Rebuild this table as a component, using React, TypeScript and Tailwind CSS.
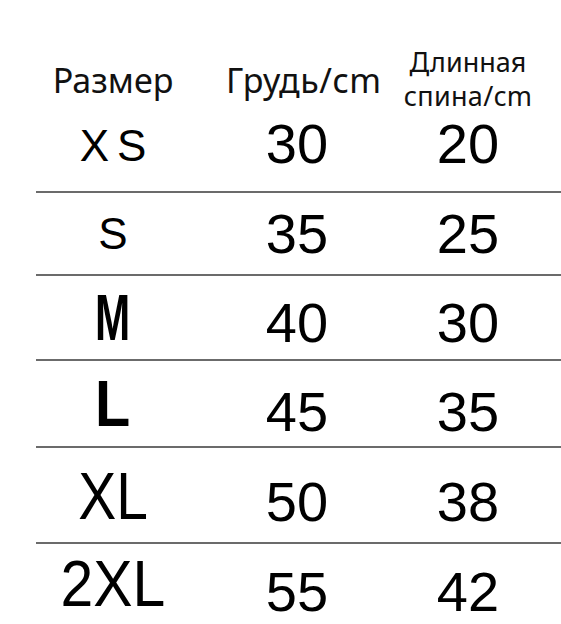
const rows = [
  {
    size: "XS",
    sizeClass: "text-[44px] font-normal tracking-[8px] pl-[8px]",
    chest: "30",
    back: "20",
    rowClass: "h-[91px]",
    numPad: "pb-[3px] leading-none",
  },
  {
    size: "S",
    sizeClass: "text-[44px] font-normal",
    chest: "35",
    back: "25",
    rowClass: "h-[81px]",
    numPad: "leading-none",
  },
  {
    size: "M",
    sizeClass: "text-[64px] font-bold scale-x-66",
    chest: "40",
    back: "30",
    rowClass: "h-[83px]",
    numPad: "pt-[11px] leading-none",
  },
  {
    size: "L",
    sizeClass: "text-[64px] font-bold scale-x-90",
    chest: "45",
    back: "35",
    rowClass: "h-[85px]",
    numPad: "pt-[17px] leading-none",
  },
  {
    size: "XL",
    sizeClass: "text-[67px] font-normal scale-x-85",
    chest: "50",
    back: "38",
    rowClass: "h-[94px]",
    numPad: "pt-[14px] leading-none",
  },
  {
    size: "2XL",
    sizeClass: "text-[64px] font-normal scale-x-92",
    chest: "55",
    back: "42",
    rowClass: "h-[80px]",
    numPad: "pt-[16px] leading-[44px]",
  },
];

const App = () => {
  return (
    <div className="w-[561px] h-[624px] overflow-hidden bg-white text-black">
      {/* Header */}
      <div className="grid grid-cols-[226px_142px_1fr] h-[100px] items-start font-['Noto_Sans',sans-serif] text-[#111]">
        <div className="pt-[63px] text-center text-[34px] leading-none">Размер</div>
        <div className="pt-[63px] text-center text-[34px] leading-none tracking-[0.5px] whitespace-nowrap">
          Грудь/cm
        </div>
        <div className="pt-[45px] pl-[7px] text-center text-[27px] leading-[34px]">
          <div>Длинная</div>
          <div className="whitespace-nowrap tracking-[0.3px]">спина/cm</div>
        </div>
      </div>

      {/* Rows */}
      {rows.map((row, i) => (
        <div key={row.size}>
          <div
            className={`grid grid-cols-[226px_142px_1fr] font-['Liberation_Sans',Arial,sans-serif] ${row.rowClass}`}
          >
            <div className="flex items-center justify-center">
              <span className={`inline-block leading-none ${row.sizeClass}`}>{row.size}</span>
            </div>
            <div className={`flex items-center justify-center text-[56px] ${row.numPad}`}>
              {row.chest}
            </div>
            <div className={`flex items-center justify-center pl-[7px] text-[56px] ${row.numPad}`}>
              {row.back}
            </div>
          </div>
          {i < rows.length - 1 && <div className="ml-[36px] h-[2px] bg-[#6b6b6b]" />}
        </div>
      ))}
    </div>
  );
};

export default App;
